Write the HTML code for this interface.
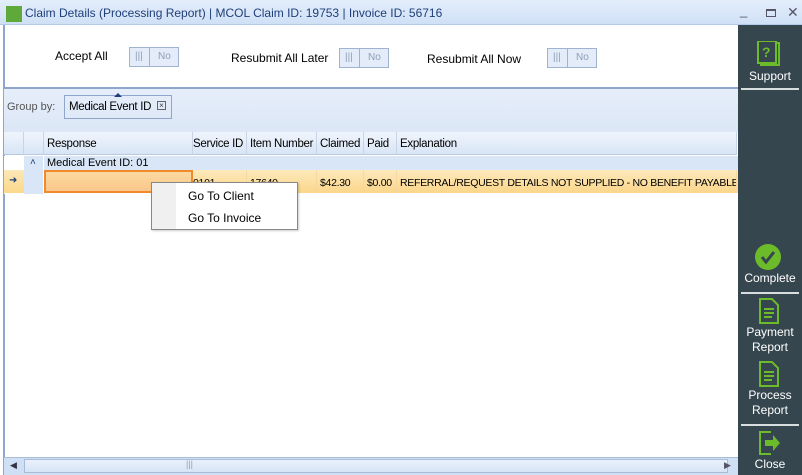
<!DOCTYPE html><html><head><style>
*{margin:0;padding:0;box-sizing:border-box}
body{width:802px;height:475px;overflow:hidden;background:#fff;font-family:"Liberation Sans",sans-serif;font-size:12px;color:#000;position:relative}
.a{position:absolute;white-space:nowrap}
.tg{position:absolute;height:20px;border:1px solid #9fb3d1;background:#e3ecf8;font-size:10px;color:#8ea0b8}
.tg span{position:absolute;top:3px}
.hc{position:absolute;top:132px;height:23px;background:linear-gradient(#f0f5fc,#d8e5f6);border-right:1px solid #c8d4e6;border-bottom:1px solid #b8c8e0;padding:6px 0 0 3px;white-space:nowrap;overflow:hidden;font-size:11.5px;letter-spacing:-0.3px}
.dc{position:absolute;top:171px;height:22px;padding:6px 0 0 3px;font-size:10.5px;white-space:nowrap;overflow:hidden;border-right:1px solid #f6d7a0;letter-spacing:-0.3px}
.sb{position:absolute;left:738px;width:64px;color:#fff;text-align:center;font-size:12px;line-height:15px}
.sep{position:absolute;left:741px;width:58px;height:2px;background:#d8dde0}
</style></head><body>
<div class="a" style="left:0;top:0;width:802px;height:25px;background:linear-gradient(#e4eefb,#cfe0f6);border-bottom:1px solid #b3c9e8"></div>
<div class="a" style="left:6px;top:6px;width:16px;height:16px;background:#5fa83a"></div>
<div class="a" style="left:25px;top:6px;color:#1f3f7a;font-size:12px">Claim Details (Processing Report) | MCOL Claim ID: 19753 | Invoice ID: 56716</div>
<div class="a" style="left:740px;top:3px;color:#556;font-size:13px">_</div>
<div class="a" style="left:766px;top:9px;width:10px;height:8px;border:1px solid #556;border-top-width:2px"></div>
<div class="a" style="left:787px;top:4px;color:#556;font-size:14px">✕</div>
<div class="a" style="left:3px;top:25px;width:2px;height:450px;background:#8ea6cc"></div>
<div class="a" style="left:55px;top:49px">Accept All</div>
<div class="tg" style="left:129px;top:47px;width:50px"><span style="left:5px">|||</span><span style="left:19px;top:0;height:18px;border-left:1px solid #9fb3d1;padding:3px 0 0 8px;">No</span></div>
<div class="a" style="left:231px;top:51px">Resubmit All Later</div>
<div class="tg" style="left:339px;top:48px;width:50px"><span style="left:5px">|||</span><span style="left:19px;top:0;height:18px;border-left:1px solid #9fb3d1;padding:3px 0 0 8px;">No</span></div>
<div class="a" style="left:427px;top:52px">Resubmit All Now</div>
<div class="tg" style="left:547px;top:48px;width:50px"><span style="left:5px">|||</span><span style="left:19px;top:0;height:18px;border-left:1px solid #9fb3d1;padding:3px 0 0 8px;">No</span></div>
<div class="a" style="left:4px;top:87px;width:734px;height:45px;background:linear-gradient(#e6eefa,#dbe6f6);border-top:2px solid #8ea6cc"></div>
<div class="a" style="left:7px;top:101px;color:#555;font-size:11px">Group by:</div>
<div class="a" style="left:64px;top:95px;width:108px;height:24px;border:1px solid #8ea6cc;padding:5px 0 0 4px;font-size:11.5px;letter-spacing:-0.3px">Medical Event ID</div>
<div class="a" style="left:157px;top:101px;width:9px;height:9px;border:1px solid #666;font-size:8px;line-height:7px;text-align:center;color:#444">×</div>
<div class="a" style="left:114px;top:93px;width:0;height:0;border:4px solid transparent;border-bottom:4px solid #1f3f7a;border-top:0"></div>
<div class="hc" style="left:4px;width:20px"></div>
<div class="hc" style="left:24px;width:20px"></div>
<div class="hc" style="left:44px;width:149px">Response</div>
<div class="hc" style="left:193px;width:54px;padding-left:0">Service ID</div>
<div class="hc" style="left:247px;width:70px">Item Number</div>
<div class="hc" style="left:317px;width:47px">Claimed</div>
<div class="hc" style="left:364px;width:33px">Paid</div>
<div class="hc" style="left:397px;width:340px">Explanation</div>
<div class="a" style="left:24px;top:156px;width:714px;height:14px;background:#d8e6f8"></div>
<div class="a" style="left:4px;top:156px;width:20px;height:14px;background:#fff"></div>
<div class="a" style="left:24px;top:156px;width:20px;height:38px;background:#d8e6f8;border-right:1px solid #fff"></div>
<div class="a" style="left:30px;top:157px;font-size:10px;color:#1f3f7a">˄</div>
<div class="a" style="left:47px;top:157px;font-size:11px">Medical Event ID: 01</div>
<div class="a" style="left:4px;top:170px;width:20px;height:24px;background:linear-gradient(#fde8b8,#fbd88a);border-bottom:1px solid #fff"></div>
<div class="a" style="left:9px;top:175px;font-size:10px;color:#1f3f7a">➜</div>
<div class="a" style="left:44px;top:170px;width:694px;height:24px;background:linear-gradient(#fde9bb,#fbd68a);border-bottom:1px solid #fff"></div>
<div class="a" style="left:44px;top:170px;width:149px;height:23px;border:2px solid #f08a2c;background:linear-gradient(#fbd9a0,#fbc78a)"></div>
<div class="dc" style="left:193px;width:54px;padding-left:0">0101</div>
<div class="dc" style="left:247px;width:70px">17640</div>
<div class="dc" style="left:317px;width:47px">$42.30</div>
<div class="dc" style="left:364px;width:33px">$0.00</div>
<div class="dc" style="left:397px;width:340px">REFERRAL/REQUEST DETAILS NOT SUPPLIED - NO BENEFIT PAYABLE</div>
<div class="a" style="left:151px;top:182px;width:147px;height:48px;background:#fff;border:1px solid #888;box-shadow:1px 1px 2px rgba(0,0,0,.2)"><div style="position:absolute;left:0;top:0;width:24px;height:46px;background:#f0f0f0"></div><div style="position:absolute;left:36px;top:6px">Go To Client</div><div style="position:absolute;left:36px;top:28px">Go To Invoice</div></div>
<div class="a" style="left:4px;top:457px;width:734px;height:18px;background:#cfdff4;border-top:1px solid #a8bcd8"></div>
<div class="a" style="left:24px;top:459px;width:704px;height:14px;background:linear-gradient(#eaf1fb,#d6e4f6);border:1px solid #a8bcd8"></div>
<div class="a" style="left:186px;top:459px;font-size:9px;color:#8ea0b8">|||</div>
<div class="a" style="left:10px;top:460px;font-size:9px;color:#334">◀</div>
<div class="a" style="left:724px;top:460px;font-size:9px;color:#556">▶</div>
<div class="a" style="left:738px;top:25px;width:64px;height:450px;background:#36464f"></div>
<svg class="a" style="left:756px;top:41px" width="26" height="26" viewBox="0 0 26 26"><rect x="5" y="2" width="18" height="22" fill="none" stroke="#6bbb2a" stroke-width="2"/><rect x="2" y="0" width="18" height="22" fill="#36464f" stroke="#6bbb2a" stroke-width="2"/><text x="6" y="16" fill="#6bbb2a" font-size="14" font-weight="bold" font-family="Liberation Sans">?</text></svg>
<div class="sb" style="top:69px">Support</div>
<div class="sep" style="top:88px"></div>
<svg class="a" style="left:755px;top:244px" width="26" height="26"><circle cx="13" cy="13" r="13" fill="#6bbb2a"/><path d="M7 13l4 5 8-10" stroke="#36464f" stroke-width="3" fill="none"/></svg>
<div class="sb" style="top:271px">Complete</div>
<div class="sep" style="top:292px"></div>
<svg class="a" style="left:758px;top:297px" width="22" height="28"><path d="M2 2h12l6 6v18H2z" fill="none" stroke="#6bbb2a" stroke-width="2"/><path d="M6 12h10M6 16h10M6 20h8" stroke="#6bbb2a" stroke-width="2"/></svg>
<div class="sb" style="top:325px">Payment<br>Report</div>
<svg class="a" style="left:758px;top:360px" width="22" height="28"><path d="M2 2h12l6 6v18H2z" fill="none" stroke="#6bbb2a" stroke-width="2"/><path d="M6 12h10M6 16h10M6 20h8" stroke="#6bbb2a" stroke-width="2"/></svg>
<div class="sb" style="top:388px">Process<br>Report</div>
<div class="sep" style="top:424px"></div>
<svg class="a" style="left:758px;top:430px" width="24" height="26"><path d="M13 2H2v22h11" fill="none" stroke="#6bbb2a" stroke-width="2"/><path d="M7 10h8V5l7 8-7 8v-5H7z" fill="#6bbb2a"/></svg>
<div class="sb" style="top:457px">Close</div>
</body></html>
